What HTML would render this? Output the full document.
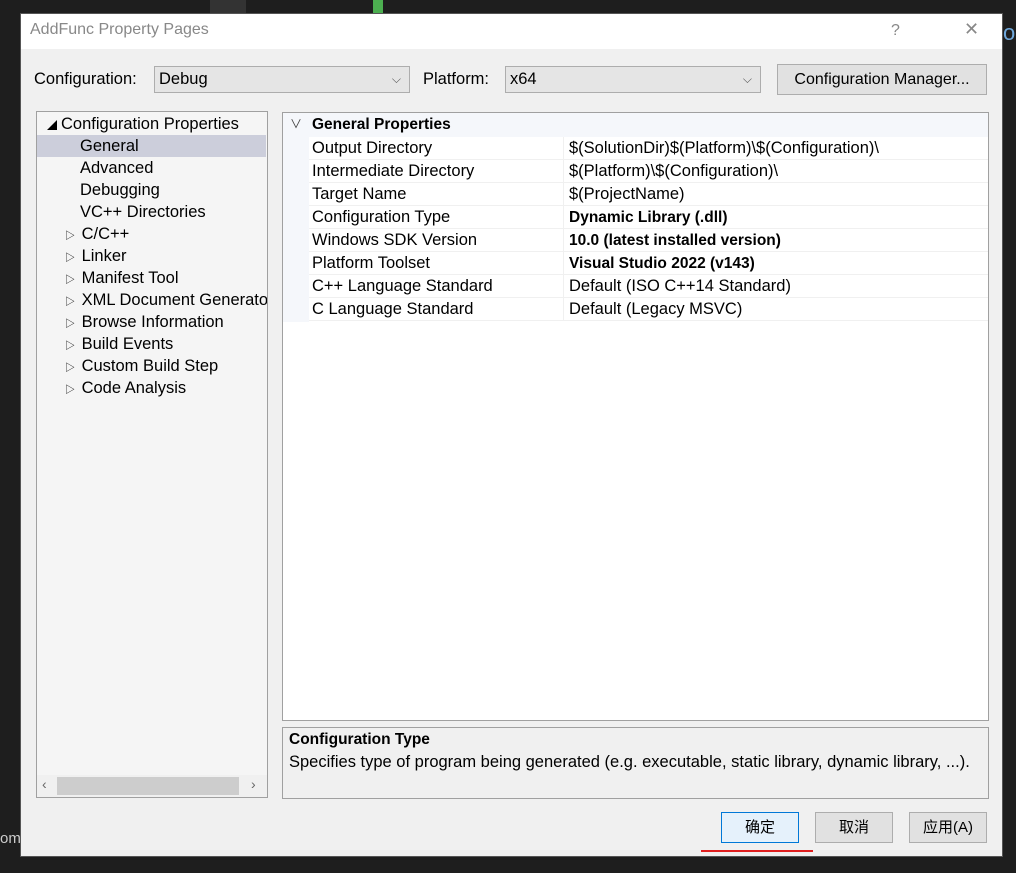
<!DOCTYPE html>
<html><head><meta charset="utf-8"><style>
*{box-sizing:border-box;margin:0;padding:0}
body{width:1016px;height:873px;background:#1e1e1e;position:relative;overflow:hidden;font-family:"Liberation Sans","Noto Sans CJK SC",sans-serif;font-size:16.5px;color:#000}
.abs{position:absolute}
.dlg{left:20px;top:13px;width:983px;height:844px;background:#f0f0f0;border:1px solid #555}
.title{left:0;top:0;width:100%;height:35px;background:#fff;color:#888;font-size:16px;padding:7px 0 0 9px}
.combo{background:#e5e5e5;border:1px solid #adadad;height:27px;padding:3px 4px;font-size:16.5px}
.combo .arr{position:absolute;right:8px;top:5px;color:#555;font-size:12px}
.btn{background:#e1e1e1;border:1px solid #adadad;text-align:center;font-size:15px}
.tree{left:15px;top:97px;width:232px;height:687px;background:#f5f5f5;border:1px solid #a0a0a0;overflow:hidden}
.ti{position:absolute;left:0;height:22px;line-height:22px;white-space:nowrap}
.ar{display:inline-block;width:12px;font-size:10px}
.grid{left:261px;top:98px;width:707px;height:609px;background:#fff;border:1px solid #a0a0a0}
.row{position:absolute;left:26px;width:679px;height:23px;border-bottom:1px solid #f0f0f0;line-height:22px}
.row .n{position:absolute;left:3px}
.row .v{position:absolute;left:254px;border-left:1px solid #f0f0f0;padding-left:5px;height:23px;width:425px}
.b{font-weight:bold;font-size:15.5px}
.row .v.b{line-height:24px}
</style></head><body>
<div class="abs" style="left:210px;top:0;width:36px;height:13px;background:#333"></div>
<div class="abs" style="left:373px;top:0;width:10px;height:13px;background:#4caf50"></div>
<div class="abs" style="left:1003px;top:20px;color:#6fa8dc;font-size:22px">o</div>
<div class="abs" style="left:0;top:830px;color:#ccc;font-size:15px">om</div>
<div class="dlg abs">
 <div class="title abs">AddFunc Property Pages
  <span class="abs" style="left:870px;top:8px;color:#888">?</span>
  <span class="abs" style="left:943px;top:5px;color:#888;font-size:18px">✕</span></div>
 <div class="abs" style="left:13px;top:56px">Configuration:</div>
 <div class="combo abs" style="left:133px;top:52px;width:256px">Debug<span class="arr">⌵</span></div>
 <div class="abs" style="left:402px;top:56px">Platform:</div>
 <div class="combo abs" style="left:484px;top:52px;width:256px">x64<span class="arr">⌵</span></div>
 <div class="btn abs" style="left:756px;top:50px;width:210px;height:31px;line-height:29px;font-size:16px">Configuration Manager...</div>
 <div class="tree abs">
  <div class="ti" style="top:1px;left:10px"><span class="ar" style="width:14px">◢</span>Configuration Properties</div>
  <div class="ti" style="top:23px;width:229px;background:#cccedb;padding-left:43px">General</div>
  <div class="ti" style="top:45px;left:43px">Advanced</div>
  <div class="ti" style="top:67px;left:43px">Debugging</div>
  <div class="ti" style="top:89px;left:43px">VC++ Directories</div>
  <div class="ti" style="top:111px;left:28px"><span class="ar">▷</span>&nbsp;C/C++</div>
  <div class="ti" style="top:133px;left:28px"><span class="ar">▷</span>&nbsp;Linker</div>
  <div class="ti" style="top:155px;left:28px"><span class="ar">▷</span>&nbsp;Manifest Tool</div>
  <div class="ti" style="top:177px;left:28px"><span class="ar">▷</span>&nbsp;XML Document Generator</div>
  <div class="ti" style="top:199px;left:28px"><span class="ar">▷</span>&nbsp;Browse Information</div>
  <div class="ti" style="top:221px;left:28px"><span class="ar">▷</span>&nbsp;Build Events</div>
  <div class="ti" style="top:243px;left:28px"><span class="ar">▷</span>&nbsp;Custom Build Step</div>
  <div class="ti" style="top:265px;left:28px"><span class="ar">▷</span>&nbsp;Code Analysis</div>
  <div class="abs" style="left:0;top:663px;width:230px;height:22px;background:#f0f0f0"></div>
  <div class="abs" style="left:20px;top:665px;width:182px;height:18px;background:#cdcdcd"></div>
  <div class="abs" style="left:5px;top:664px;color:#666;font-size:14px">‹</div>
  <div class="abs" style="left:214px;top:664px;color:#666;font-size:14px">›</div>
 </div>
 <div class="grid abs">
  <div class="abs" style="left:0;top:0;width:705px;height:24px;background:#f5f7fb"></div>
  <div class="abs" style="left:0;top:0;width:26px;height:209px;background:#f5f7fb"></div>
  <div class="abs" style="left:7px;top:2px;font-size:12px;color:#444">∨</div>
  <div class="abs b" style="left:29px;top:3px">General Properties</div>
  <div class="row" style="top:24px"><span class="n">Output Directory</span><span class="v">$(SolutionDir)$(Platform)\$(Configuration)\</span></div>
  <div class="row" style="top:47px"><span class="n">Intermediate Directory</span><span class="v">$(Platform)\$(Configuration)\</span></div>
  <div class="row" style="top:70px"><span class="n">Target Name</span><span class="v">$(ProjectName)</span></div>
  <div class="row" style="top:93px"><span class="n">Configuration Type</span><span class="v b">Dynamic Library (.dll)</span></div>
  <div class="row" style="top:116px"><span class="n">Windows SDK Version</span><span class="v b">10.0 (latest installed version)</span></div>
  <div class="row" style="top:139px"><span class="n">Platform Toolset</span><span class="v b">Visual Studio 2022 (v143)</span></div>
  <div class="row" style="top:162px"><span class="n">C++ Language Standard</span><span class="v">Default (ISO C++14 Standard)</span></div>
  <div class="row" style="top:185px"><span class="n">C Language Standard</span><span class="v">Default (Legacy MSVC)</span></div>
 </div>
 <div class="abs" style="left:261px;top:713px;width:707px;height:72px;border:1px solid #a0a0a0;padding:3px 6px">
  <div class="b">Configuration Type</div>
  <div style="margin-top:4px;white-space:nowrap">Specifies type of program being generated (e.g. executable, static library, dynamic library, ...).</div>
 </div>
 <div class="btn abs" style="left:700px;top:798px;width:78px;height:31px;line-height:29px;background:#e5f1fb;border-color:#0078d7">确定</div>
 <div class="btn abs" style="left:794px;top:798px;width:78px;height:31px;line-height:29px">取消</div>
 <div class="btn abs" style="left:888px;top:798px;width:78px;height:31px;line-height:29px">应用(A)</div>
 <div class="abs" style="left:680px;top:836px;width:112px;height:2px;background:#e02020"></div>
</div>
</body></html>
